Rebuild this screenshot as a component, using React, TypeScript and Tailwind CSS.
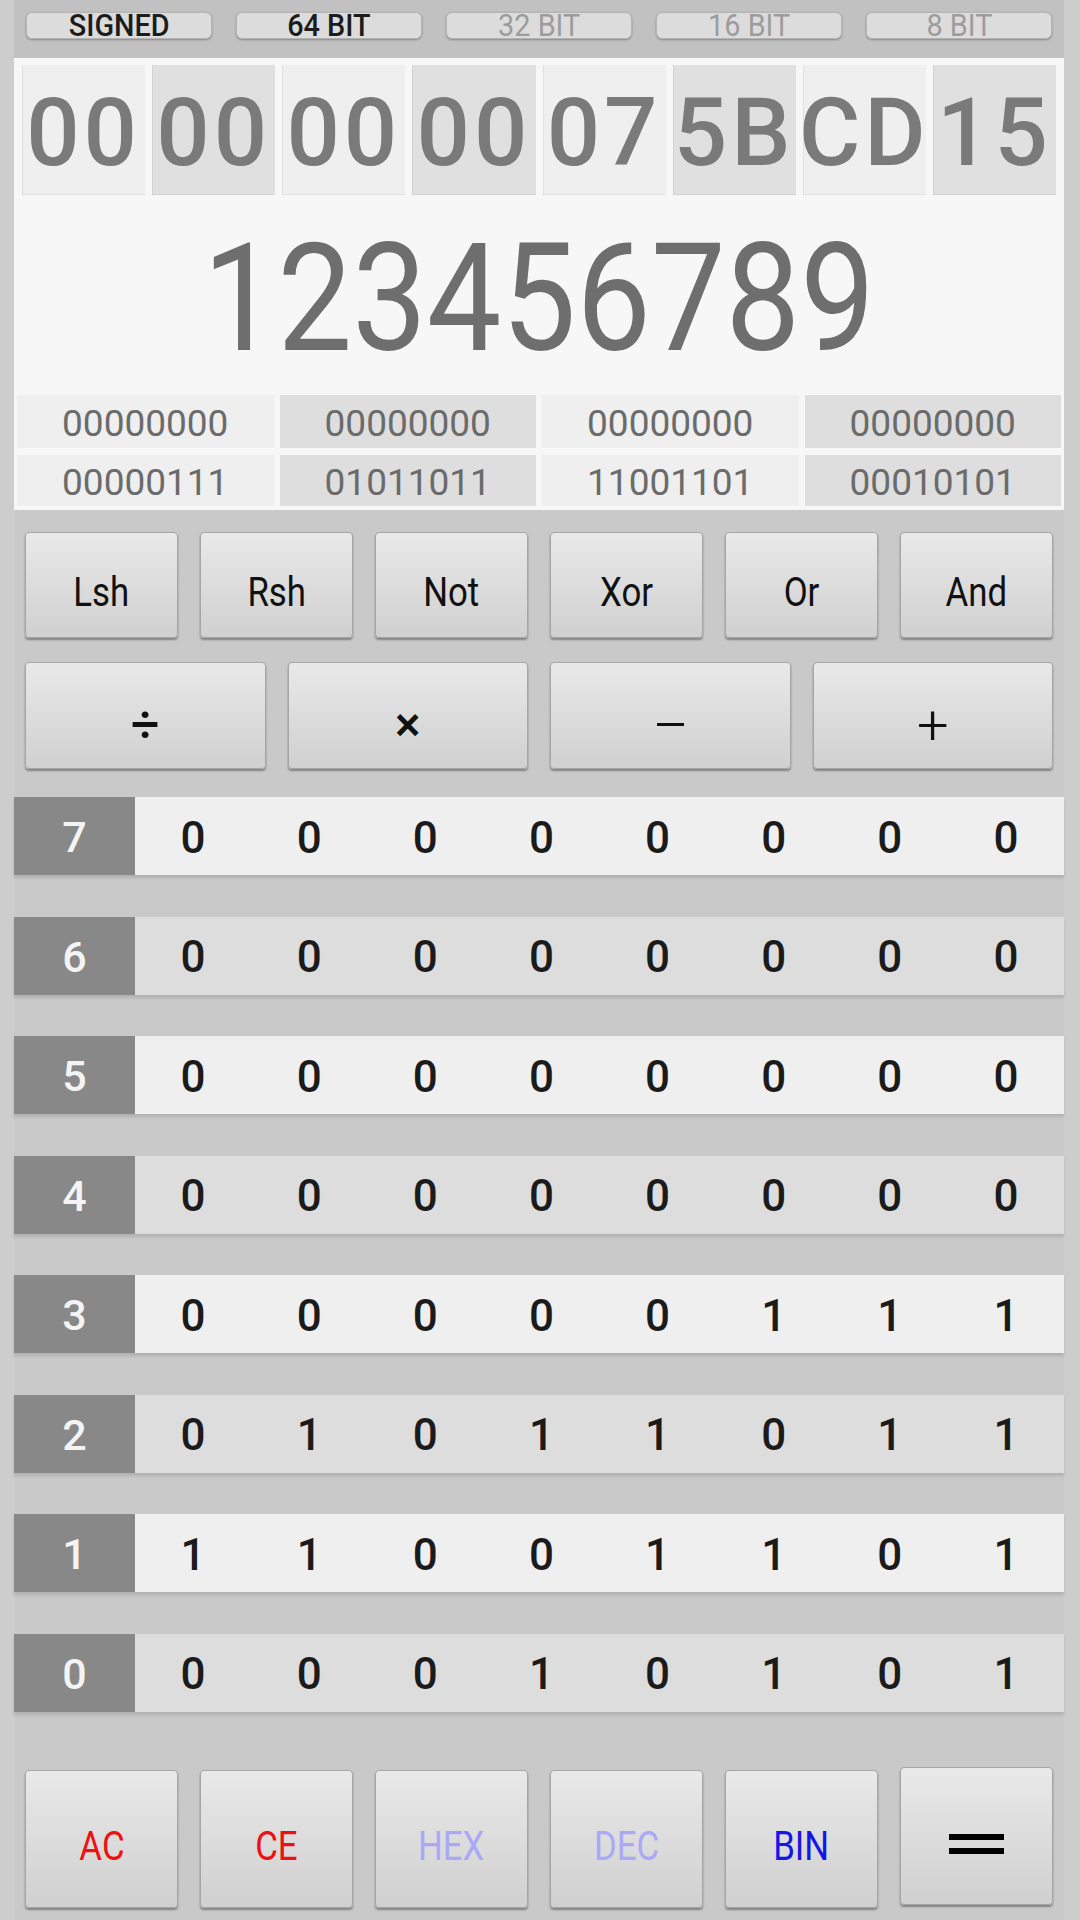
import clsx from "clsx";

const hexBytes = ["00", "00", "00", "00", "07", "5B", "CD", "15"];
const binBytes = [
    "00000000",
    "00000000",
    "00000000",
    "00000000",
    "00000111",
    "01011011",
    "11001101",
    "00010101",
];

const modes = [
    { label: "SIGNED", on: true },
    { label: "64 BIT", on: true },
    { label: "32 BIT", on: false },
    { label: "16 BIT", on: false },
    { label: "8 BIT", on: false },
];

function Key({ children, className }: { children: React.ReactNode; className?: string }) {
    return (
        <div
            className={clsx(
                "flex items-center justify-center rounded-[4px] border border-[#a6a6a6] bg-linear-to-b from-[#e9e9e9] to-[#d0d0d0] shadow-[0_2px_2px_rgba(0,0,0,0.35)]",
                className
            )}
        >
            {children}
        </div>
    );
}

function Label({ text, className }: { text: string; className?: string }) {
    return <span className={clsx("inline-block scale-x-[0.87] text-[40px] leading-none", className)}>{text}</span>;
}

export default function App() {
    return (
        <div className="w-[1080px] h-[1920px] bg-[#cdcdcd] px-[14px] font-['Roboto','Liberation_Sans',sans-serif] overflow-hidden">
            <div className="w-[1050px] h-full bg-[#c9c9c9] flex flex-col">
                {/* mode toggles */}
                <div className="h-[58px] bg-[#c1c1c1] grid grid-cols-5 gap-[24px] px-[12px] pt-[12px]">
                    {modes.map((m) => (
                        <div
                            key={m.label}
                            className="h-[27px] rounded-[6px] border border-[#b4b4b4] bg-[#dcdcdc] shadow-[0_1px_2px_rgba(0,0,0,0.3)] flex items-end justify-center"
                        >
                            <span
                                className={clsx(
                                    "inline-block scale-x-[0.93] text-[31px] leading-[24px]",
                                    m.on ? "text-[#1c1c1c] font-medium" : "text-[#9c9c9c]"
                                )}
                            >
                                {m.label}
                            </span>
                        </div>
                    ))}
                </div>

                {/* display panel */}
                <div className="h-[452px] bg-[#f7f7f7] flex flex-col">
                    <div className="grid grid-cols-8 gap-[7px] px-[8px] pt-[7px]">
                        {hexBytes.map((b, i) => (
                            <div
                                key={i}
                                className={clsx(
                                    "h-[130px] flex items-center justify-center shadow-[inset_1px_0_0_rgba(0,0,0,0.06),inset_0_-1px_0_rgba(0,0,0,0.05)]",
                                    i % 2 === 0 ? "bg-[#efefef]" : "bg-[#e0e0e0]"
                                )}
                            >
                                <span className="text-[94px] leading-none font-medium tracking-[4px] text-[#7a7a7a] pt-[6px]">{b}</span>
                            </div>
                        ))}
                    </div>
                    <div className="h-[200px] flex items-center justify-center">
                        <span className="inline-block scale-x-[0.88] text-[151px] leading-none text-[#6e6e6e] pt-[6px]">123456789</span>
                    </div>
                    <div className="grid grid-cols-4 gap-x-[6px] gap-y-[7px] px-[3px]">
                        {[0, 1, 2, 3, 4, 5, 6, 7].map((i) => (
                            <div
                                key={i}
                                className={clsx(
                                    "flex items-center justify-center",
                                    i < 4 ? "h-[53px]" : "h-[51px]",
                                    i % 2 === 0 ? "bg-[#efefef]" : "bg-[#dedede]"
                                )}
                            >
                                <span className="text-[37px] leading-none text-[#6b6b6b] pt-[4px]">{binBytes[i]}</span>
                            </div>
                        ))}
                    </div>
                </div>

                {/* bitwise ops */}
                <div className="grid grid-cols-6 gap-[22px] px-[11px] mt-[22px]">
                    {["Lsh", "Rsh", "Not", "Xor", "Or", "And"].map((op) => (
                        <Key key={op} className="h-[106px] pt-[16px]">
                            <Label text={op} className="text-[#111111]" />
                        </Key>
                    ))}
                </div>

                {/* arithmetic */}
                <div className="grid grid-cols-4 gap-[22px] px-[11px] mt-[24px]">
                    <Key className="h-[107px] pt-[18px]">
                        <span className="text-[50px] leading-none text-[#111111] font-medium">÷</span>
                    </Key>
                    <Key className="h-[107px] pt-[18px]">
                        <span className="text-[48px] leading-none text-[#111111] font-medium">×</span>
                    </Key>
                    <Key className="h-[107px] pt-[18px]">
                        <div className="w-[27px] h-[3px] bg-[#111111]" />
                    </Key>
                    <Key className="h-[107px] pt-[18px]">
                        <span className="text-[56px] leading-none text-[#111111] font-light">+</span>
                    </Key>
                </div>

                {/* bit grid */}
                <div className="flex flex-col gap-[41.5px] mt-[28px]">
                    {[7, 6, 5, 4, 3, 2, 1, 0].map((row) => (
                        <div key={row} className="h-[78px] flex shadow-[0_3px_3px_rgba(0,0,0,0.12)]">
                            <div className="w-[121px] bg-[#888888] flex items-center justify-center">
                                <span className="text-[43px] leading-none font-medium text-[#f4f4f4] pt-[3px]">{row}</span>
                            </div>
                            <div className={clsx("flex-1 grid grid-cols-8", row % 2 === 1 ? "bg-[#efefef]" : "bg-[#dddddd]")}>
                                {binBytes[7 - row].split("").map((bit, j) => (
                                    <div key={j} className="flex items-center justify-center">
                                        <span className="text-[44px] leading-none font-medium text-[#1b1b1b] pt-[3px]">{bit}</span>
                                    </div>
                                ))}
                            </div>
                        </div>
                    ))}
                </div>

                {/* base keys */}
                <div className="grid grid-cols-6 gap-[22px] px-[11px] mt-[58px]">
                    <Key className="h-[138px] pt-[16px]">
                        <Label text="AC" className="text-[#ee1111]" />
                    </Key>
                    <Key className="h-[138px] pt-[16px]">
                        <Label text="CE" className="text-[#ee1111]" />
                    </Key>
                    <Key className="h-[138px] pt-[16px]">
                        <Label text="HEX" className="text-[#a9a9f7]" />
                    </Key>
                    <Key className="h-[138px] pt-[16px]">
                        <Label text="DEC" className="text-[#a9a9f7]" />
                    </Key>
                    <Key className="h-[138px] pt-[16px]">
                        <Label text="BIN" className="text-[#1616e6]" />
                    </Key>
                    <Key className="h-[138px] -mt-[3px] pt-[16px] flex-col gap-[8px]">
                        <div className="w-[55px] h-[6px] bg-black" />
                        <div className="w-[55px] h-[6px] bg-black" />
                    </Key>
                </div>
            </div>
        </div>
    );
}
